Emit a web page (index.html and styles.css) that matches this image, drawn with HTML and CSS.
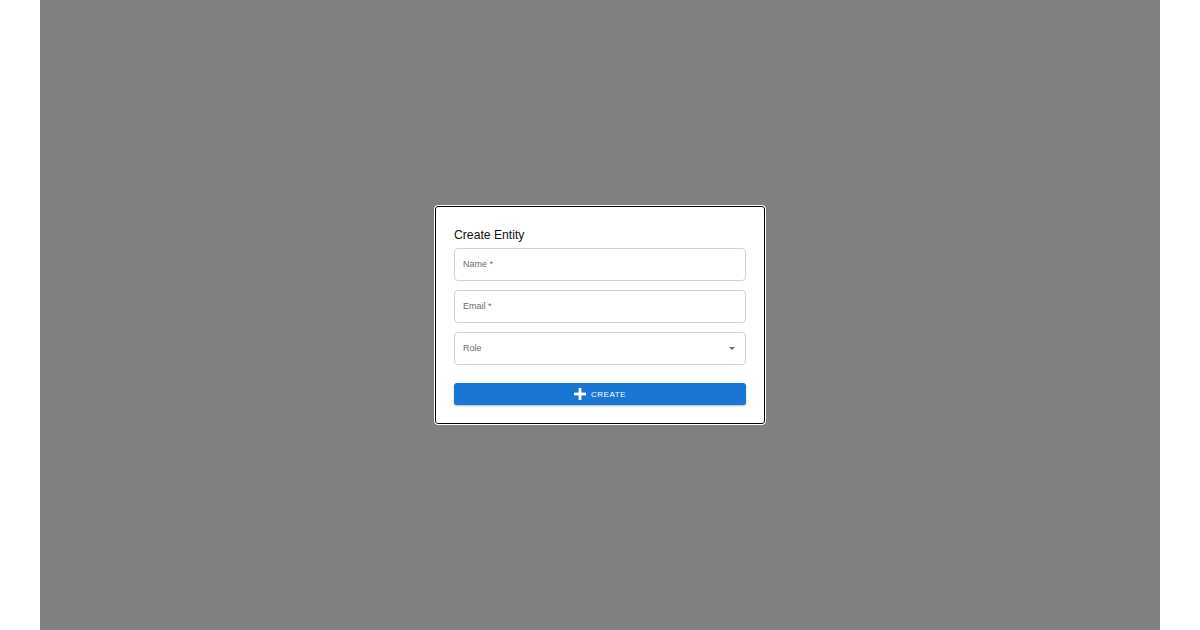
FILE: index.html
```html
<!DOCTYPE html>
<html lang="en">
<head>
<meta charset="utf-8">
<title>Create Entity</title>
<link rel="stylesheet" href="styles.css">
</head>
<body>
<div class="page">
  <div class="backdrop">
    <div class="dialog">
      <h2 class="title">Create Entity</h2>
      <div class="field"><span class="label">Name *</span></div>
      <div class="field"><span class="label">Email *</span></div>
      <div class="field select"><span class="label">Role</span><span class="arrow"></span></div>
      <button class="btn" type="button">
        <svg class="plus" viewBox="0 0 12 12" width="12" height="12"><rect x="4.6" y="0" width="2.8" height="12" fill="#fff"/><rect x="0" y="4.6" width="12" height="2.8" fill="#fff"/></svg>
        <span>CREATE</span>
      </button>
    </div>
  </div>
</div>
</body>
</html>
```
FILE: styles.css
```css
html, body {
  margin: 0;
  padding: 0;
  height: 100%;
  background: #fff;
  font-family: "Liberation Sans", Arial, sans-serif;
}
.page {
  height: 630px;
  padding: 0 40px;
  box-sizing: border-box;
}
.backdrop {
  height: 100%;
  background: #808080;
  display: flex;
  align-items: center;
  justify-content: center;
}
.dialog {
  width: 332px;
  box-sizing: border-box;
  background: #fff;
  border: 1px solid #fff;
  border-radius: 4px;
  box-shadow: inset 0 0 0 1px #000;
  padding: 21px 19px 19px;
  display: flex;
  flex-direction: column;
}
.title {
  margin: 0 0 5px;
  font-size: 12.2px;
  line-height: 16px;
  font-weight: 400;
  color: #111;
}
.field {
  height: 33px;
  box-sizing: border-box;
  border: 1px solid #d0d0d0;
  border-radius: 4px;
  display: flex;
  align-items: center;
  padding: 0 8px 1px;
  margin-bottom: 9px;
}
.field.select {
  justify-content: space-between;
  margin-bottom: 18px;
}
.label {
  font-size: 9px;
  color: #6b6b6b;
}
.arrow {
  width: 0;
  height: 0;
  border-left: 3px solid transparent;
  border-right: 3px solid transparent;
  border-top: 3px solid #6b6b6b;
  margin-right: 2px;
}
.btn {
  height: 22px;
  border: 0;
  border-radius: 3px;
  background: #1976d2;
  color: #fff;
  display: flex;
  align-items: center;
  justify-content: center;
  gap: 5px;
  font-family: "Liberation Sans", Arial, sans-serif;
  font-size: 8px;
  letter-spacing: 0.5px;
  font-weight: 400;
  box-shadow: 0 1px 2px rgba(0,0,0,0.3);
  padding: 0;
}
.plus {
  display: block;
}
```
